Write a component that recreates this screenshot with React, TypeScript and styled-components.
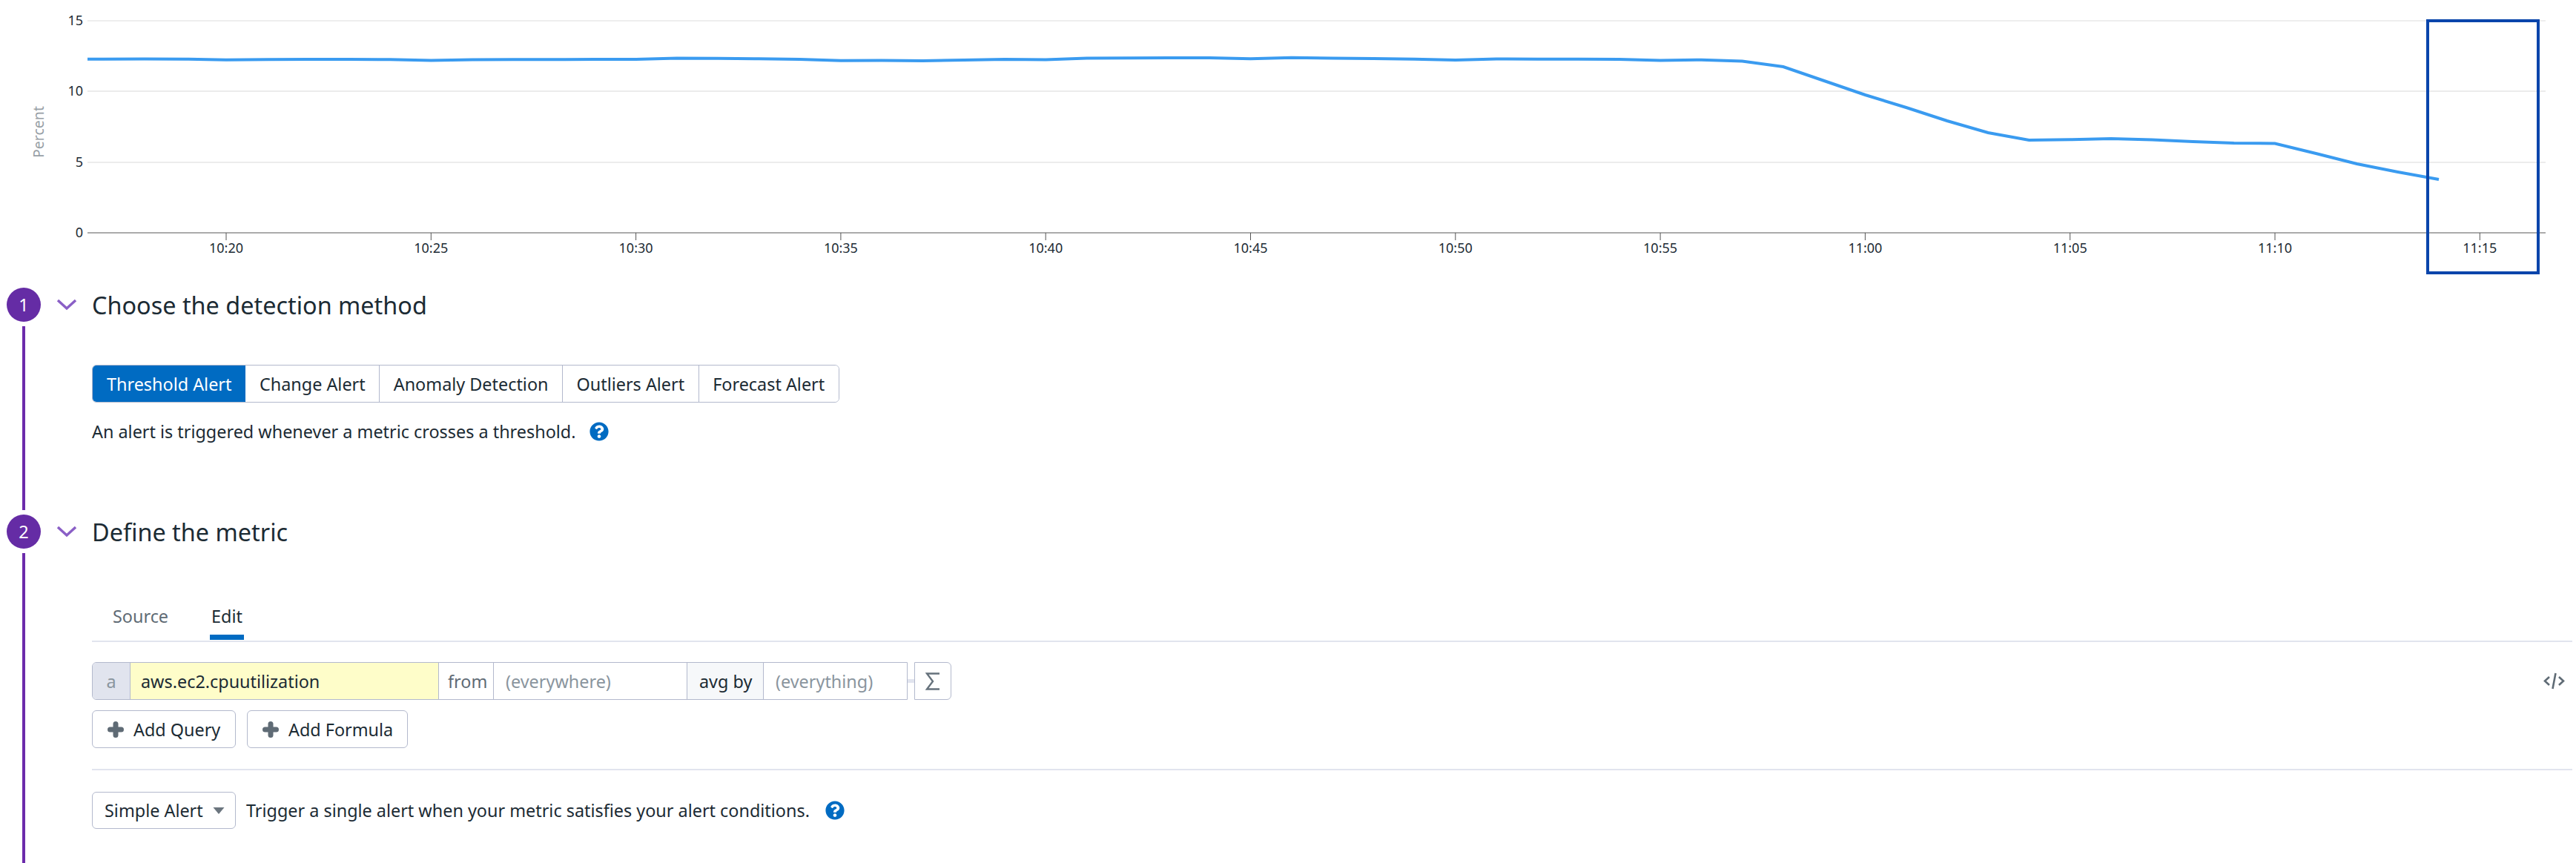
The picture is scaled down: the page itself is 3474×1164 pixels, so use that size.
import React from 'react';
import styled, { createGlobalStyle } from 'styled-components';
import { FaQuestionCircle } from 'react-icons/fa';

const GlobalStyle = createGlobalStyle`
  html, body {
    margin: 0;
    padding: 0;
    background: #fff;
    overflow: hidden;
  }
  body {
    font-family: 'Noto Sans', 'Open Sans', sans-serif;
    font-size: 23.4px;
    color: #1c2b34;
  }
  * {
    box-sizing: border-box;
  }
`;

const TEXT = '#1c2b34';
const MUTED = '#8a959e';
const ICON = '#5f6b75';
const BORDER = '#b3b9cd';
const PALE = '#e1e4ee';
const BLUE = '#006bc2';
const PURPLE = '#652ca5';

const Page = styled.div`
  width: 3474px;
  height: 1164px;
  overflow: hidden;
`;

const ChartSvg = styled.svg`
  display: block;
  width: 3474px;
  height: 388px;
`;

const AxisLabel = styled.text`
  font-family: 'Noto Sans', sans-serif;
  font-size: 18px;
  fill: ${TEXT};
`;

const UnitLabel = styled.text`
  font-family: 'Noto Sans', sans-serif;
  font-size: 19.5px;
  fill: #98a0a6;
`;

const Step = styled.section<{ $height?: number }>`
  display: grid;
  grid-template-columns: 64px 60px 1fr;
  height: ${(props) => props.$height}px;
  padding-right: 5px;
`;

const Rail = styled.div`
  display: flex;
  flex-direction: column;
  align-items: center;
`;

const StepNumber = styled.div`
  width: 46px;
  height: 46px;
  flex: none;
  border-radius: 50%;
  background: ${PURPLE};
  color: #fff;
  font-size: 23.4px;
  display: flex;
  align-items: center;
  justify-content: center;
`;

const RailLine = styled.div`
  width: 4px;
  flex: 1;
  margin: 6px 0;
  background: #6c2bab;
`;

const ChevronCell = styled.div`
  height: 46px;
  padding-left: 12px;
  display: flex;
  align-items: center;
`;

const StepBody = styled.div`
  min-width: 0;
`;

const StepTitle = styled.h2`
  margin: 0;
  height: 46px;
  font-size: 32.4px;
  font-weight: 400;
  line-height: 46px;
  color: ${TEXT};
`;

const Segmented = styled.div`
  display: inline-flex;
  margin-top: 58px;
  height: 51px;
  border: 1px solid ${BORDER};
  border-radius: 6px;
  overflow: hidden;
`;

const Segment = styled.button<{ $active?: boolean }>`
  height: 100%;
  margin: 0;
  padding: 0 ${(props) => (props.$active ? 19 : 18.5)}px;
  border: 0;
  border-left: ${(props) => (props.$active ? '0' : `1px solid ${BORDER}`)};
  background: ${(props) => (props.$active ? BLUE : '#fff')};
  color: ${(props) => (props.$active ? '#fff' : TEXT)};
  font: inherit;

  &:nth-child(2) {
    border-left: 0;
  }
`;

const Hint = styled.div<{ $gap: number }>`
  display: flex;
  align-items: center;
  gap: ${(props) => props.$gap}px;
  line-height: 30px;
`;

const MethodHint = styled(Hint)`
  margin-top: 24px;
`;

const HelpIcon = styled(FaQuestionCircle)`
  width: 26px;
  height: 26px;
  color: ${BLUE};
  flex: none;
`;

const TabBar = styled.div`
  display: flex;
  gap: 54px;
  margin-top: 76px;
  padding-left: 26px;
  border-bottom: 2px solid ${PALE};
`;

const Tab = styled.div<{ $active?: boolean }>`
  padding: 0 2px 10px;
  margin-bottom: 1px;
  line-height: 30px;
  border-bottom: 7px solid ${(props) => (props.$active ? BLUE : 'transparent')};
  color: ${(props) => (props.$active ? TEXT : ICON)};
`;

const QueryRow = styled.div`
  display: flex;
  align-items: center;
  height: 51px;
  margin-top: 27px;
`;

const QueryBox = styled.div`
  display: flex;
  height: 51px;
  border: 1px solid ${BORDER};
  border-radius: 6px 0 0 6px;
  overflow: hidden;
`;

const QueryCell = styled.div<{ $width: number; $bg?: string; $color?: string; $pad?: number; $center?: boolean }>`
  width: ${(props) => props.$width}px;
  padding-left: ${(props) => props.$pad ?? 0}px;
  background: ${(props) => props.$bg ?? '#fff'};
  color: ${(props) => props.$color ?? TEXT};
  border-right: 1px solid ${BORDER};
  display: flex;
  align-items: center;
  justify-content: ${(props) => (props.$center ? 'center' : 'flex-start')};
  white-space: nowrap;

  &:last-child {
    border-right: 0;
  }
`;

const Connector = styled.div`
  width: 9px;
  height: 5px;
  background: ${PALE};
`;

const SigmaButton = styled.div`
  width: 50px;
  height: 51px;
  border: 1px solid ${BORDER};
  border-radius: 0 6px 6px 0;
  display: flex;
  align-items: center;
  justify-content: center;
`;

const CodeToggle = styled.div`
  margin-left: auto;
  margin-right: 10px;
  display: flex;
`;

const ButtonRow = styled.div`
  display: flex;
  gap: 15px;
  margin-top: 14px;
`;

const OutlineButton = styled.button<{ $width: number; $height: number }>`
  width: ${(props) => props.$width}px;
  height: ${(props) => props.$height}px;
  margin: 0;
  padding: 0 0 0 20px;
  border: 1px solid ${BORDER};
  border-radius: 6px;
  background: #fff;
  color: ${TEXT};
  font: inherit;
  white-space: nowrap;
  display: flex;
  align-items: center;
  gap: 13px;
`;

const Divider = styled.div`
  height: 2px;
  margin-top: 28px;
  background: ${PALE};
`;

const AlertRow = styled(Hint)`
  margin-top: 29px;
`;

const SelectButton = styled(OutlineButton)`
  padding-left: 16px;
`;

const AlertHelp = styled(Hint)`
  height: 50px;
`;

const xForMinute = (minute: number) => 305 + (minute - 20) * 55.26;

// y pixel of the series for each minute, 10:17 to 11:14
const series = [
  79.7, 79.6, 79.7, 80.8, 80.2, 80, 80, 80.2, 81.5, 80.6, 80.3, 80.3, 80, 80, 78.5, 78.8, 79.2, 80, 81.8, 81.5, 82, 81,
  80, 80.5, 78.5, 78.2, 78, 78, 79.3, 77.8, 78.5, 79, 79.8, 81, 79.5, 79.7, 79.8, 80, 81.5, 80.7, 82.5, 90, 109, 128,
  145, 163, 179, 189, 188.3, 187, 188.5, 191, 193, 193.5, 207, 221, 232, 242,
];

const linePoints = [`118,79.7`, ...series.map((y, i) => `${xForMinute(17 + i).toFixed(1)},${y}`)].join(' ');

const yTicks = [
  { label: '15', y: 28, strong: true },
  { label: '10', y: 123 },
  { label: '5', y: 219 },
  { label: '0', y: 314 },
];

const xTicks = ['10:20', '10:25', '10:30', '10:35', '10:40', '10:45', '10:50', '10:55', '11:00', '11:05', '11:10', '11:15'];

const MetricChart: React.FC = () => (
  <ChartSvg viewBox="0 0 3474 388">
    {yTicks.map((tick) => (
      <React.Fragment key={tick.label}>
        <AxisLabel x={112} y={tick.y + 6} textAnchor="end">
          {tick.label}
        </AxisLabel>
        {tick.label !== '0' && (
          <line x1={118} x2={3433} y1={tick.y} y2={tick.y} stroke={tick.strong ? '#eeeeee' : '#e6e6e6'} strokeWidth={tick.strong ? 2 : 1.5} />
        )}
      </React.Fragment>
    ))}
    <line x1={118} x2={3433} y1={314} y2={314} stroke="#8f8f8f" strokeWidth={1.5} />
    {xTicks.map((label, i) => {
      const x = 305 + i * 276.3;
      return (
        <React.Fragment key={label}>
          <line x1={x} x2={x} y1={314} y2={324} stroke="#555" strokeWidth={1} />
          <AxisLabel x={x} y={341} textAnchor="middle">
            {label}
          </AxisLabel>
        </React.Fragment>
      );
    })}
    <UnitLabel transform="translate(59 178) rotate(-90)" textAnchor="middle">
      Percent
    </UnitLabel>
    <polyline points={linePoints} fill="none" stroke="#3a9bf0" strokeWidth={4} />
    <rect x={3274} y={28} width={149} height={340} fill="none" stroke="#0a45ab" strokeWidth={4} />
  </ChartSvg>
);

const Chevron: React.FC = () => (
  <svg width="28" height="18" viewBox="0 0 28 18">
    <path d="M2 3 L14 14 L26 3" fill="none" stroke="#8a5fc6" strokeWidth="3.5" />
  </svg>
);

const SigmaIcon: React.FC = () => (
  <svg width="20" height="24" viewBox="0 0 20 24">
    <path d="M19 1.5 H2 L10 12 L2 22.5 H19" fill="none" stroke="#66727c" strokeWidth="2.4" />
  </svg>
);

const CodeIcon: React.FC = () => (
  <svg width="29" height="23" viewBox="0 0 29 23">
    <path d="M8 6 L2 11.5 L8 17 M21 6 L27 11.5 L21 17 M16.5 1 L12.5 22" fill="none" stroke={ICON} strokeWidth="2.6" />
  </svg>
);

const Caret: React.FC = () => (
  <svg width="16" height="9" viewBox="0 0 16 9">
    <path d="M0.5 0 H15.5 L8 9 Z" fill="#6b757e" />
  </svg>
);

const PlusIcon: React.FC = () => (
  <svg width="22" height="22" viewBox="0 0 22 22">
    <path d="M11 3.5 V18.5 M3.5 11 H18.5" fill="none" stroke={ICON} strokeWidth="7" strokeLinecap="round" />
  </svg>
);

const App: React.FC = () => (
  <Page>
    <GlobalStyle />
    <MetricChart />

    <Step $height={306}>
      <Rail>
        <StepNumber>1</StepNumber>
        <RailLine />
      </Rail>
      <ChevronCell>
        <Chevron />
      </ChevronCell>
      <StepBody>
        <StepTitle>Choose the detection method</StepTitle>
        <Segmented>
          <Segment $active>Threshold Alert</Segment>
          <Segment>Change Alert</Segment>
          <Segment>Anomaly Detection</Segment>
          <Segment>Outliers Alert</Segment>
          <Segment>Forecast Alert</Segment>
        </Segmented>
        <MethodHint $gap={19}>
          An alert is triggered whenever a metric crosses a threshold.
          <HelpIcon />
        </MethodHint>
      </StepBody>
    </Step>

    <Step $height={476}>
      <Rail>
        <StepNumber>2</StepNumber>
        <RailLine />
      </Rail>
      <ChevronCell>
        <Chevron />
      </ChevronCell>
      <StepBody>
        <StepTitle>Define the metric</StepTitle>
        <TabBar>
          <Tab>Source</Tab>
          <Tab $active>Edit</Tab>
        </TabBar>
        <QueryRow>
          <QueryBox>
            <QueryCell $width={51} $bg={PALE} $color={MUTED} $center>
              a
            </QueryCell>
            <QueryCell $width={416} $bg="#fefdc9" $pad={14}>
              aws.ec2.cpuutilization
            </QueryCell>
            <QueryCell $width={74} $color={ICON} $pad={12}>
              from
            </QueryCell>
            <QueryCell $width={261} $color={MUTED} $pad={16}>
              (everywhere)
            </QueryCell>
            <QueryCell $width={103} $bg="#f6f8fa" $pad={16}>
              avg by
            </QueryCell>
            <QueryCell $width={193} $color={MUTED} $pad={16}>
              (everything)
            </QueryCell>
          </QueryBox>
          <Connector />
          <SigmaButton>
            <SigmaIcon />
          </SigmaButton>
          <CodeToggle>
            <CodeIcon />
          </CodeToggle>
        </QueryRow>
        <ButtonRow>
          <OutlineButton $width={194} $height={51}>
            <PlusIcon />
            Add Query
          </OutlineButton>
          <OutlineButton $width={217} $height={51}>
            <PlusIcon />
            Add Formula
          </OutlineButton>
        </ButtonRow>
        <Divider />
        <AlertRow $gap={14}>
          <SelectButton $width={194} $height={50}>
            Simple Alert
            <Caret />
          </SelectButton>
          <AlertHelp $gap={21}>
            Trigger a single alert when your metric satisfies your alert conditions.
            <HelpIcon />
          </AlertHelp>
        </AlertRow>
      </StepBody>
    </Step>
  </Page>
);

export default App;
